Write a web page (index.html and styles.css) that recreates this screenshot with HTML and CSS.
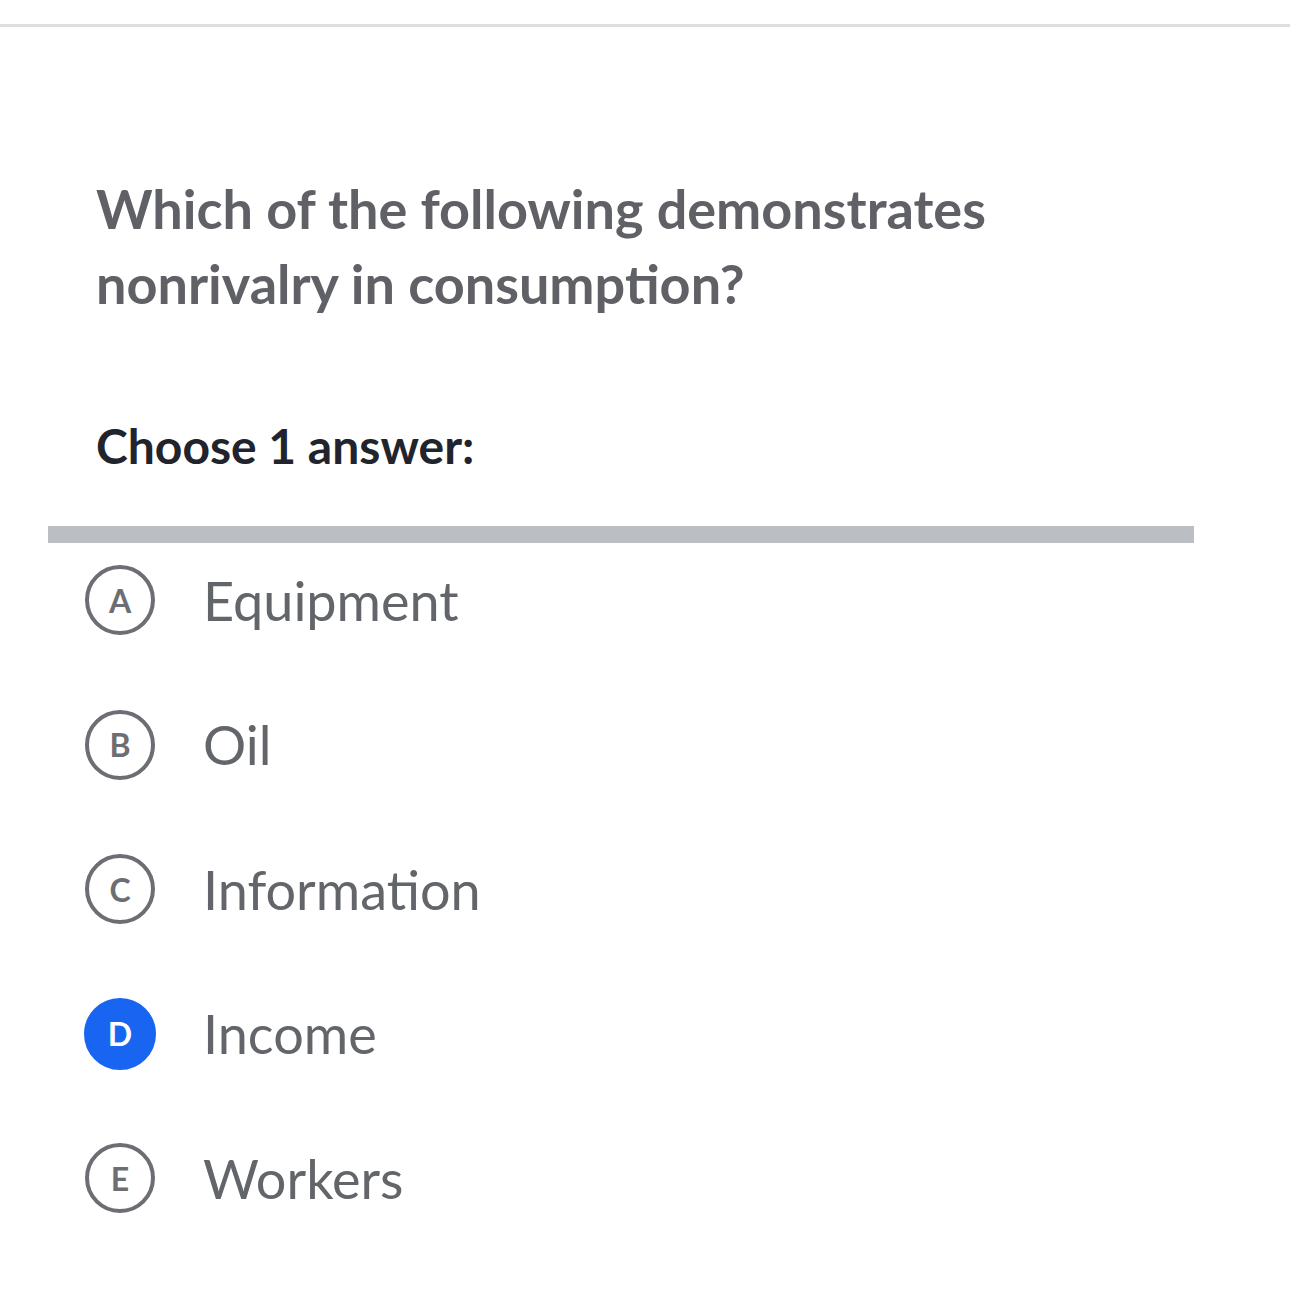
FILE: index.html
```html
<!DOCTYPE html>
<html>
<head>
<meta charset="utf-8">
<link rel="stylesheet" href="styles.css">
</head>
<body>
<div class="topline"></div>
<main class="quiz">
  <h1 class="question">Which of the following demonstrates nonrivalry in consumption?</h1>
  <h2 class="prompt">Choose 1 answer:</h2>
  <div class="bar"></div>
  <ul class="options">
    <li class="option"><span class="badge">A</span><span class="label">Equipment</span></li>
    <li class="option"><span class="badge">B</span><span class="label">Oil</span></li>
    <li class="option"><span class="badge">C</span><span class="label">Information</span></li>
    <li class="option selected"><span class="badge">D</span><span class="label">Income</span></li>
    <li class="option"><span class="badge">E</span><span class="label">Workers</span></li>
  </ul>
</main>
</body>
</html>
```
FILE: styles.css
```css
html, body {
  margin: 0;
  padding: 0;
  background: #ffffff;
  font-family: Lato, "Noto Sans", sans-serif;
}
.topline {
  margin-top: 24px;
  height: 3px;
  background: #dedede;
}
.quiz {
  display: flex;
  flex-direction: column;
}
.question {
  margin: 144px 0 0 0;
  padding: 0 250px 0 96px;
  font-size: 54px;
  line-height: 75px;
  font-weight: 700;
  color: #5f6166;
}
.prompt {
  margin: 95px 0 0 0;
  padding-left: 96px;
  font-size: 48px;
  line-height: 60px;
  font-weight: 700;
  color: #21242c;
}
.bar {
  margin: 50px 0 0 48px;
  width: 1146px;
  height: 17px;
  background: #bbbec2;
}
.options {
  list-style: none;
  margin: 0;
  padding: 7px 0 0 0;
  display: flex;
  flex-direction: column;
  gap: 44.5px;
}
.option {
  height: 100px;
  display: flex;
  align-items: center;
  padding-left: 85px;
}
.badge {
  box-sizing: border-box;
  width: 70px;
  height: 70px;
  border-radius: 50%;
  border: 4px solid #6d6e73;
  color: #6d6e73;
  display: flex;
  align-items: center;
  justify-content: center;
  font-size: 32px;
  font-weight: 700;
  flex-shrink: 0;
}
.option.selected .badge {
  background: #1865f2;
  border-color: #1865f2;
  color: #ffffff;
  width: 72px;
  height: 72px;
  margin-left: -1px;
  margin-right: -1px;
}
.label {
  margin-left: 48px;
  font-size: 54px;
  color: #626569;
}
```
